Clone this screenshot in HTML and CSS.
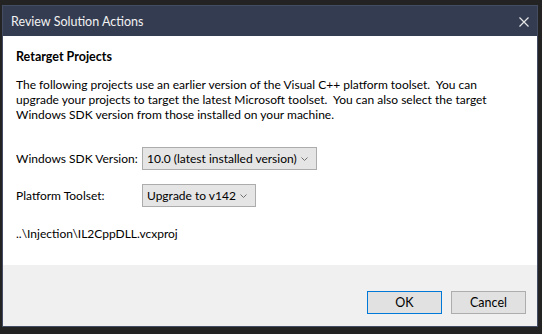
FILE: index.html
```html
<!DOCTYPE html>
<html lang="en">
<head>
    <meta charset="UTF-8">
    <title>Review Solution Actions</title>
    <link rel="stylesheet" href="styles.css">
</head>
<body>
    <div class="window">
        <div class="titlebar">
            <span class="title">Review Solution Actions</span>
            <svg class="close" width="10" height="10" viewBox="0 0 10 10">
                <path d="M0.5 0.5 L9.5 9.5 M9.5 0.5 L0.5 9.5" stroke="#e6e6e6" stroke-width="1.2" fill="none"/>
            </svg>
        </div>

        <div class="content">
            <h1 class="heading">Retarget Projects</h1>
            <p class="intro">
                The following projects use an earlier version of the Visual C++ platform toolset.&nbsp; You can<br>
                upgrade your projects to target the latest Microsoft toolset.&nbsp; You can also select the target<br>
                Windows SDK version from those installed on your machine.
            </p>

            <div class="field-row">
                <label class="field-label">Windows SDK Version:</label>
                <div class="combo combo-sdk">
                    <span>10.0 (latest installed version)</span>
                    <svg class="chevron" width="7" height="4" viewBox="0 0 7 4">
                        <path d="M0.5 0.5 L3.5 3.5 L6.5 0.5" stroke="#707070" stroke-width="1" fill="none"/>
                    </svg>
                </div>
            </div>

            <div class="field-row">
                <label class="field-label">Platform Toolset:</label>
                <div class="combo combo-toolset">
                    <span>Upgrade to v142</span>
                    <svg class="chevron" width="7" height="4" viewBox="0 0 7 4">
                        <path d="M0.5 0.5 L3.5 3.5 L6.5 0.5" stroke="#707070" stroke-width="1" fill="none"/>
                    </svg>
                </div>
            </div>

            <p class="project-path">..\Injection\IL2CppDLL.vcxproj</p>
        </div>

        <div class="footer">
            <button class="btn btn-default">OK</button>
            <button class="btn">Cancel</button>
        </div>
    </div>
</body>
</html>
```

FILE: styles.css
```css
* {
    margin: 0;
    padding: 0;
    box-sizing: border-box;
}

body {
    background: #232324;
    font-family: Lato, 'Noto Sans', sans-serif;
    font-size: 12px;
    color: #000;
    padding: 5px 0 0 2px;
}

.window {
    width: 536px;
    height: 322px;
    border: 1px solid #444c63;
    display: flex;
    flex-direction: column;
}

.titlebar {
    height: 30px;
    background: #343c51;
    color: #f2f2f2;
    display: flex;
    align-items: center;
    justify-content: space-between;
    padding: 0 8px 0 8px;
}

.title {
    font-size: 12.5px;
}

.close {
    margin-top: 1px;
}

.content {
    height: 229px;
    background: #fff;
    padding: 13px 13px 0 13px;
}

.heading {
    font-size: 12.5px;
    font-weight: 700;
    line-height: 16px;
    margin-bottom: 12px;
}

.intro {
    line-height: 15px;
    margin-bottom: 25px;
}

.field-row {
    display: flex;
    align-items: center;
    margin-bottom: 14px;
}

.field-label {
    width: 126px;
    white-space: nowrap;
}

.combo {
    height: 23px;
    background: #e5e5e5;
    border: 1px solid #acacac;
    display: flex;
    align-items: center;
    justify-content: space-between;
    padding: 0 8px 0 4px;
    white-space: nowrap;
}

.combo-sdk {
    width: 175px;
}

.combo-toolset {
    width: 114px;
}

.chevron {
    margin-top: 1px;
}

.project-path {
    line-height: 15px;
    margin-top: 19px;
}

.footer {
    flex: 1;
    background: #f0f0f0;
    display: flex;
    justify-content: flex-end;
    align-items: flex-start;
    gap: 9px;
    padding: 26px 11px 0 0;
}

.btn {
    width: 75px;
    height: 23px;
    background: #e1e1e1;
    border: 1px solid #adadad;
    font-family: inherit;
    font-size: 12.5px;
    color: #000;
}

.btn-default {
    border-color: #0078d7;
}
```
